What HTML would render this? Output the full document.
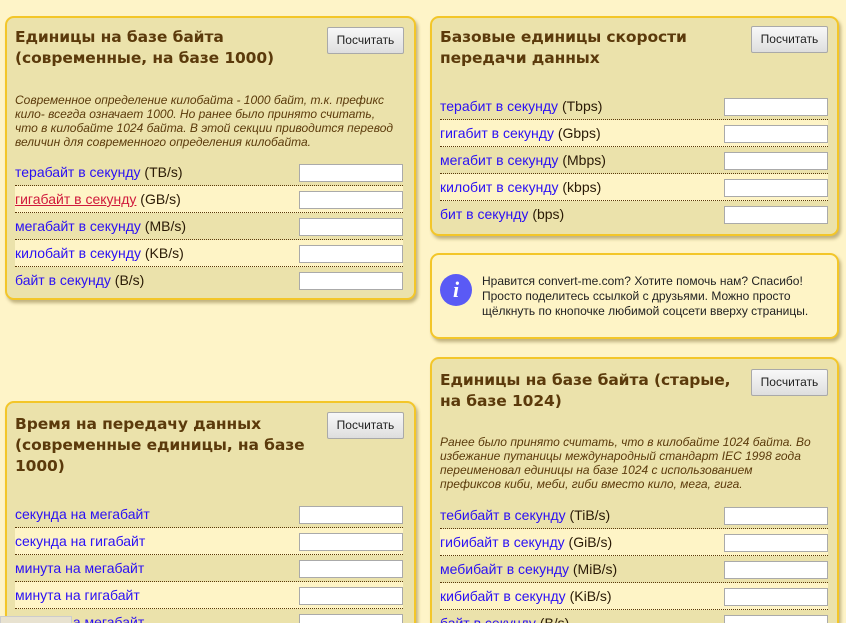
<!DOCTYPE html>
<html><head><meta charset="utf-8"><style>
*{margin:0;padding:0;box-sizing:border-box}
html,body{width:846px;height:623px;overflow:hidden}
body{background:#fef4c8;font-family:"Liberation Sans",Arial,sans-serif;position:relative}
.p{position:absolute;background:#ebe2ab;border:2px solid #f3c629;border-radius:9px;box-shadow:2px 3px 3px rgba(120,100,40,.45)}
.t{position:absolute;font-family:"DejaVu Sans",sans-serif;font-weight:bold;font-size:15.5px;letter-spacing:-0.1px;line-height:21px;color:#5b3a0b}
.b{position:absolute;width:77px;height:27px;border:1px solid #a9a9a9;border-radius:2px;background:linear-gradient(#f8f8f8,#dedede);font-size:12px;color:#222;text-align:center;line-height:25px}
.d{position:absolute;font-style:italic;font-size:12px;line-height:14px;color:#5b3a0b;white-space:nowrap}
.r{position:absolute;height:27px;border-bottom:1px dotted #5b3a0b;font-size:14px;line-height:26px;color:#2a1a05}
.r.l{border-bottom:none}
.r.a{background:#fef4c6}
.r a{color:#2a0ff5;text-decoration:none}
.r a.h{color:#d0193c;text-decoration:underline}
.r i{position:absolute;right:0;top:5px;width:104px;height:18px;background:#fff;border:1px solid #aaa}
</style></head><body>

<div class="p" style="left:5px;top:16px;width:411px;height:284px"></div>
<div class="t" style="left:15px;top:27px">Единицы на базе байта<br>(современные, на базе 1000)</div>
<div class="b" style="left:327px;top:27px">Посчитать</div>
<div class="d" style="left:15px;top:93px">Современное определение килобайта - 1000 байт, т.к. префикс<br>кило- всегда означает 1000. Но ранее было принято считать,<br>что в килобайте 1024 байта. В этой секции приводится перевод<br>величин для современного определения килобайта.</div>
<div class="r" style="left:15px;top:159px;width:388px"><a>терабайт в секунду</a> (TB/s)<i></i></div>
<div class="r a" style="left:15px;top:186px;width:388px"><a class="h">гигабайт в секунду</a> (GB/s)<i></i></div>
<div class="r" style="left:15px;top:213px;width:388px"><a>мегабайт в секунду</a> (MB/s)<i></i></div>
<div class="r a" style="left:15px;top:240px;width:388px"><a>килобайт в секунду</a> (KB/s)<i></i></div>
<div class="r l" style="left:15px;top:267px;width:388px"><a>байт в секунду</a> (B/s)<i></i></div>

<div class="p" style="left:430px;top:16px;width:409px;height:220px"></div>
<div class="t" style="left:440px;top:27px">Базовые единицы скорости<br>передачи данных</div>
<div class="b" style="left:751px;top:26px">Посчитать</div>
<div class="r" style="left:440px;top:93px;width:388px"><a>терабит в секунду</a> (Tbps)<i></i></div>
<div class="r a" style="left:440px;top:120px;width:388px"><a>гигабит в секунду</a> (Gbps)<i></i></div>
<div class="r" style="left:440px;top:147px;width:388px"><a>мегабит в секунду</a> (Mbps)<i></i></div>
<div class="r a" style="left:440px;top:174px;width:388px"><a>килобит в секунду</a> (kbps)<i></i></div>
<div class="r l" style="left:440px;top:201px;width:388px"><a>бит в секунду</a> (bps)<i></i></div>

<div class="p" style="left:430px;top:253px;width:409px;height:86px;background:#fef4c6"></div>
<div style="position:absolute;left:440px;top:274px;width:32px;height:32px;border-radius:50%;background:#5a5af5;color:#fff;font:italic bold 22px 'Liberation Serif',serif;text-align:center;line-height:32px">i</div>
<div style="position:absolute;left:482px;top:274px;font-size:12px;line-height:15px;color:#222">Нравится convert-me.com? Хотите помочь нам? Спасибо!<br>Просто поделитесь ссылкой с друзьями. Можно просто<br>щёлкнуть по кнопочке любимой соцсети вверху страницы.</div>

<div class="p" style="left:430px;top:357px;width:409px;height:275px"></div>
<div class="t" style="left:440px;top:370px">Единицы на базе байта (старые,<br>на базе 1024)</div>
<div class="b" style="left:751px;top:369px">Посчитать</div>
<div class="d" style="left:440px;top:435px">Ранее было принято считать, что в килобайте 1024 байта. Во<br>избежание путаницы международный стандарт IEC 1998 года<br>переименовал единицы на базе 1024 с использованием<br>префиксов киби, меби, гиби вместо кило, мега, гига.</div>
<div class="r" style="left:440px;top:502px;width:388px"><a>тебибайт в секунду</a> (TiB/s)<i></i></div>
<div class="r a" style="left:440px;top:529px;width:388px"><a>гибибайт в секунду</a> (GiB/s)<i></i></div>
<div class="r" style="left:440px;top:556px;width:388px"><a>мебибайт в секунду</a> (MiB/s)<i></i></div>
<div class="r a" style="left:440px;top:583px;width:388px"><a>кибибайт в секунду</a> (KiB/s)<i></i></div>
<div class="r l" style="left:440px;top:610px;width:388px;height:13px;overflow:hidden"><a>байт в секунду</a> (B/s)<i></i></div>

<div class="p" style="left:5px;top:401px;width:411px;height:231px"></div>
<div class="t" style="left:15px;top:414px">Время на передачу данных<br>(современные единицы, на базе<br>1000)</div>
<div class="b" style="left:327px;top:412px">Посчитать</div>
<div class="r" style="left:15px;top:501px;width:388px"><a>секунда на мегабайт</a><i></i></div>
<div class="r a" style="left:15px;top:528px;width:388px"><a>секунда на гигабайт</a><i></i></div>
<div class="r" style="left:15px;top:555px;width:388px"><a>минута на мегабайт</a><i></i></div>
<div class="r a" style="left:15px;top:582px;width:388px"><a>минута на гигабайт</a><i></i></div>
<div class="r l" style="left:15px;top:609px;width:388px;height:14px;overflow:hidden"><a>минута на мегабайт</a><i></i></div>

<div style="position:absolute;left:0;top:616px;width:72px;height:7px;background:#e8e2d0;border:1px solid #ccc;border-bottom:none"></div>
</body></html>
